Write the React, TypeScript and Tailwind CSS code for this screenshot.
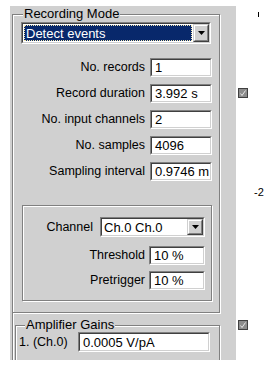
import type { ReactNode } from 'react';

const FONT = "font-['Liberation_Sans',Arial,sans-serif]";

function Sunken({ className, children }: { className: string; children?: ReactNode }) {
  return (
    <div className={`border border-t-[#808080] border-l-[#808080] border-b-white border-r-white ${className}`}>
      <div className="flex h-full items-center overflow-hidden border border-t-[#404040] border-l-[#404040] border-b-[#d0d0d0] border-r-[#d0d0d0] bg-white">
        {children}
      </div>
    </div>
  );
}

function DropButton() {
  return (
    <div className="h-full w-[16px] shrink-0 border border-t-[#d0d0d0] border-l-[#d0d0d0] border-b-[#404040] border-r-[#404040]">
      <div className="flex h-full items-center justify-center border border-t-white border-l-white border-b-[#808080] border-r-[#808080] bg-[#d0d0d0]">
        <svg width="7" height="4" viewBox="0 0 7 4">
          <path d="M0 0h7L3.5 4z" fill="#000" />
        </svg>
      </div>
    </div>
  );
}

function Edit({ value, className }: { value: string; className: string }) {
  return (
    <Sunken className={className}>
      <span className="whitespace-nowrap pl-[3px] text-[13px] leading-none">{value}</span>
    </Sunken>
  );
}

function Row({ label, value }: { label: string; value: string }) {
  return (
    <div className="flex items-center">
      <span className="w-[124px] text-right text-[12.5px] leading-none">{label}</span>
      <Edit value={value} className="ml-[5px] h-[19px] w-[62px]" />
    </div>
  );
}

function Check() {
  return (
    <div className="flex h-[10px] w-[10px] items-center justify-center border border-[#404040] bg-[#8c8c8c]">
      <svg width="8" height="8" viewBox="0 0 8 8">
        <path d="M1.5 4.5l1.5 2 3.5-5" stroke="#e8e8e8" strokeWidth="1" fill="none" />
      </svg>
    </div>
  );
}

export default function App() {
  return (
    <div className={`flex h-[371px] w-[270px] bg-white text-black ${FONT}`}>
      {/* settings panel */}
      <div className="ml-[10px] mt-[6px] h-[354px] w-[226px] overflow-hidden bg-[#d0d0d0] pl-[2px]">
        <div className="mt-[8px] h-full border-l border-[#808080] shadow-[inset_1px_0_0_#fff]">
          {/* Recording Mode */}
          <div className="relative -ml-px w-[208px] border border-[#808080] pb-[11px] pl-[8px] pt-[7px] shadow-[inset_1px_1px_0_#fff,1px_1px_0_#fff]">
            <span className="absolute -top-[8px] left-[10px] bg-[#d0d0d0] px-[1px] text-[13px] leading-[14px]">
              Recording Mode
            </span>
            <Sunken className="h-[22px] w-[190px]">
              <div className="flex h-full flex-1 items-center p-[1px]">
                <div className="flex h-full w-full items-center border border-dotted border-[#f4e8b0] bg-[#08286b] pl-[1px] text-[13px] leading-none text-white">
                  Detect events
                </div>
              </div>
              <DropButton />
            </Sunken>

            <div className="mt-[14px] flex flex-col gap-[7px]">
              <Row label="No. records" value="1" />
              <Row label="Record duration" value="3.992 s" />
              <Row label="No. input channels" value="2" />
              <Row label="No. samples" value="4096" />
              <Row label="Sampling interval" value="0.9746 m" />
            </div>

            {/* trigger box */}
            <div className="ml-[1px] mt-[24px] w-[190px] border border-[#808080] pb-[10px] pt-[11px] shadow-[inset_1px_1px_0_#fff,1px_1px_0_#fff]">
              <div className="flex items-center">
                <span className="w-[70px] text-right text-[12.5px] leading-none">Channel</span>
                <Sunken className="ml-[7px] h-[20px] w-[105px]">
                  <span className="flex-1 whitespace-nowrap pl-[2px] text-[13px] leading-none">Ch.0 Ch.0</span>
                  <DropButton />
                </Sunken>
              </div>
              <div className="mt-[9px] flex items-center">
                <span className="w-[122px] text-right text-[12.5px] leading-none">Threshold</span>
                <Edit value="10 %" className="ml-[4px] h-[19px] w-[56px]" />
              </div>
              <div className="mt-[6px] flex items-center">
                <span className="w-[122px] text-right text-[12.5px] leading-none">Pretrigger</span>
                <Edit value="10 %" className="ml-[4px] h-[19px] w-[56px]" />
              </div>
            </div>
          </div>

          {/* Amplifier Gains */}
          <div className="relative ml-[2px] mt-[12px] h-[60px] w-[205px] border border-[#808080] pl-[3px] pt-[6px] shadow-[inset_1px_1px_0_#fff,1px_1px_0_#fff]">
            <span className="absolute -top-[8px] left-[9px] bg-[#d0d0d0] px-[1px] text-[13px] leading-[14px]">
              Amplifier Gains
            </span>
            <div className="flex items-center">
              <span className="w-[59px] text-[12.5px] leading-none">1. (Ch.0)</span>
              <Edit value="0.0005 V/pA" className="h-[20px] w-[132px]" />
            </div>
          </div>
        </div>
      </div>

      {/* chart margin */}
      <div className="flex w-[34px] flex-col">
        <div className="ml-[22px] mt-[12px] h-[5px] w-px bg-black" />
        <div className="ml-[2px] mt-[71px]">
          <Check />
        </div>
        <span className="ml-[18px] mt-[88px] text-[11px] leading-[12px]">-2</span>
        <div className="ml-[2px] mt-[122px]">
          <Check />
        </div>
      </div>
    </div>
  );
}
